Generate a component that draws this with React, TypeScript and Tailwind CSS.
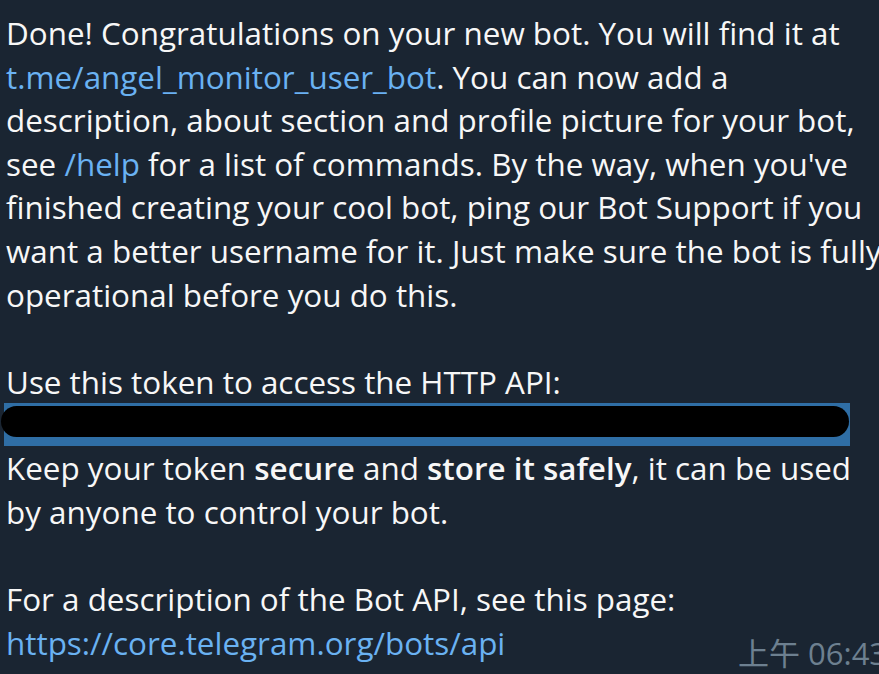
const lines = [
  [{ t: "Done! Congratulations on your new bot. You will find it at" }],
  [{ t: "t.me/angel_monitor_user_bot", link: true }, { t: ". You can now add a" }],
  [{ t: "description, about section and profile picture for your bot," }],
  [{ t: "see " }, { t: "/help", link: true }, { t: " for a list of commands. By the way, when you've" }],
  [{ t: "finished creating your cool bot, ping our Bot Support if you" }],
  [{ t: "want a better username for it. Just make sure the bot is fully" }],
  [{ t: "operational before you do this." }],
];

type Part = { t: string; link?: boolean; bold?: boolean };

function Line({ parts }: { parts: Part[] }) {
  return (
    <div className="h-[43.6px] leading-[43.6px] whitespace-nowrap">
      {parts.map((p, i) => (
        <span
          key={i}
          className={p.link ? "text-[#6ab2f2]" : p.bold ? "font-semibold" : ""}
        >
          {p.t}
        </span>
      ))}
    </div>
  );
}

export default function App() {
  return (
    <div
      className="w-[879px] h-[674px] overflow-hidden bg-[#1a2532] text-[#f7f7f7] text-[31.4px] pl-[6px] pt-[11px] relative"
      style={{ fontFamily: '"Open Sans", sans-serif' }}
    >
      {lines.map((l, i) => (
        <Line key={i} parts={l} />
      ))}
      <div className="h-[43.6px]" />
      <Line parts={[{ t: "Use this token to access the HTTP API:" }]} />
      {/* token, blacked out */}
      <div className="-ml-[2px] h-[43px] w-[846px] bg-[#2f6ea5] pt-[3px]">
        <div className="-ml-[3px] h-[31px] w-[848px] rounded-full bg-black" />
      </div>
      <Line
        parts={[
          { t: "Keep your token " },
          { t: "secure", bold: true },
          { t: " and " },
          { t: "store it safely", bold: true },
          { t: ", it can be used" },
        ]}
      />
      <Line parts={[{ t: "by anyone to control your bot." }]} />
      <div className="h-[43.6px]" />
      <Line parts={[{ t: "For a description of the Bot API, see this page:" }]} />
      <div className="flex items-end whitespace-nowrap">
        <Line parts={[{ t: "https://core.telegram.org/bots/api", link: true }]} />
        <span
          className="absolute left-[738px] bottom-[1px] text-[#6d8090] text-[31px] leading-[40px]"
          style={{ fontFamily: '"Open Sans", "Noto Sans CJK SC", sans-serif' }}
        >
          上午 06:43
        </span>
      </div>
    </div>
  );
}
